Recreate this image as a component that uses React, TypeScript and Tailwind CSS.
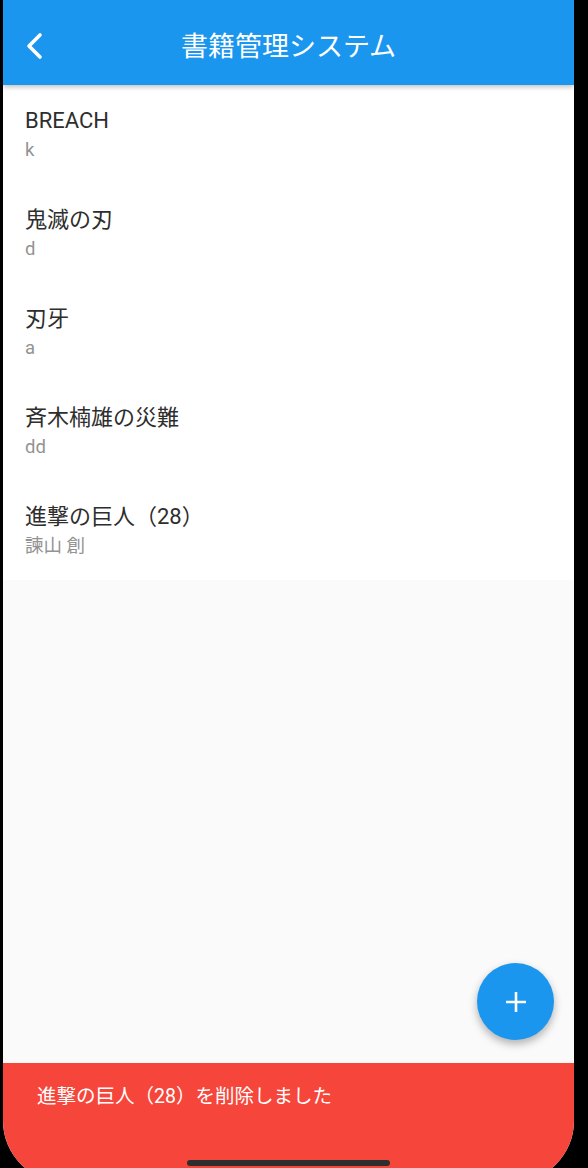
import React from 'react';

type Book = { title: string; author: string };

const books: Book[] = [
  { title: 'BREACH', author: 'k' },
  { title: '鬼滅の刃', author: 'd' },
  { title: '刃牙', author: 'a' },
  { title: '斉木楠雄の災難', author: 'dd' },
  { title: '進撃の巨人（28）', author: '諫山 創' },
];

const font = { fontFamily: 'Roboto, "Noto Sans CJK JP", sans-serif' };

const BookRow: React.FC<{ book: Book }> = ({ book }) => (
  <div className="h-[99px] px-[22px] flex flex-col justify-center">
    <div className="text-[22px] leading-[28px] text-[#2e2e2e]">{book.title}</div>
    <div className="mt-[3px] text-[18.5px] leading-[24px] text-[#939393]">{book.author}</div>
  </div>
);

const App: React.FC = () => {
  return (
    <div className="w-[588px] h-[1168px] bg-black overflow-hidden" style={font}>
      <div className="relative ml-[3px] w-[571px] h-[1182px] rounded-b-[61px] overflow-hidden bg-[#fafafa] flex flex-col">
        {/* status bar leftovers */}
        <div className="absolute top-0 left-[73px] flex gap-[6px]">
          <div className="w-[8px] h-[2px] bg-white/80" />
          <div className="w-[3px] h-[2px] bg-white/80" />
          <div className="w-[8px] h-[2px] bg-white/80" />
        </div>

        <header className="h-[85px] shrink-0 bg-[#1b96ef] shadow-[0_2px_5px_rgba(0,0,0,0.25)] relative z-10 pt-[8px] flex items-center">
          <button className="absolute left-[20px] top-[31px] w-[24px] h-[30px] flex items-center justify-center">
            <svg width="20" height="28" viewBox="0 0 20 28" fill="none">
              <path d="M15 3 L4 14 L15 25" stroke="white" strokeWidth="3.6" strokeLinecap="round" strokeLinejoin="round" />
            </svg>
          </button>
          <h1 className="w-full text-center text-white text-[27px] leading-[34px] font-normal">書籍管理システム</h1>
        </header>

        <div className="bg-white shrink-0">
          {books.map((b) => (
            <BookRow key={b.title} book={b} />
          ))}
        </div>

        <div className="flex-1 relative">
          <button className="absolute right-[20px] bottom-[23px] w-[77px] h-[77px] rounded-full bg-[#1b96ef] shadow-[0_4px_8px_rgba(0,0,0,0.3)] flex items-center justify-center">
            <svg width="22" height="22" viewBox="0 0 22 22">
              <path d="M11 1 V21 M1 11 H21" stroke="white" strokeWidth="2.6" />
            </svg>
          </button>
        </div>

        <div className="h-[119px] shrink-0 bg-[#f6453a] pl-[34px] pt-[22px]">
          <div className="text-white text-[19.5px] leading-[24px]">進撃の巨人（28）を削除しました</div>
        </div>

        <div className="absolute bottom-[16px] left-[184px] w-[203px] h-[6px] rounded-full bg-[#2e2e2e]" />
      </div>
    </div>
  );
};

export default App;
